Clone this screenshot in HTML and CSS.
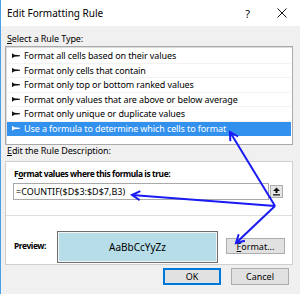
FILE: index.html
```html
<!DOCTYPE html>
<html lang="en">
<head>
    <meta charset="UTF-8" />
    <title>Edit Formatting Rule</title>
    <link rel="stylesheet" href="styles.css">
</head>
<body>
    <div class="dialog">
        <header class="titlebar">
            <span class="title">Edit Formatting Rule</span>
            <span class="help">?</span>
            <svg class="close" width="10" height="10" viewBox="0 0 10 10">
                <path d="M0.5,0.5 L9.5,9.5 M9.5,0.5 L0.5,9.5" stroke="#111" stroke-width="1" fill="none" />
            </svg>
        </header>

        <main class="body">
            <div class="label label-top"><u>S</u>elect a Rule Type:</div>

            <ul class="rule-list">
                <li><span class="bullet"></span>Format all cells based on their values</li>
                <li><span class="bullet"></span>Format only cells that contain</li>
                <li><span class="bullet"></span>Format only top or bottom ranked values</li>
                <li><span class="bullet"></span>Format only values that are above or below average</li>
                <li><span class="bullet"></span>Format only unique or duplicate values</li>
                <li class="selected"><span class="bullet"></span>Use a formula to determine which cells to format</li>
            </ul>

            <div class="label label-desc"><u>E</u>dit the Rule Description:</div>

            <section class="desc-box">
                <div class="formula-section">
                    <div class="bold-label">F<u>o</u>rmat values where this formula is true:</div>
                    <div class="formula-row">
                        <div class="formula-input">=COUNTIF($D$3:$D$7,B3)</div>
                        <button class="collapse">
                            <svg width="9" height="9" viewBox="0 0 9 9">
                                <path d="M4.5,0.5 L8,4 L5.5,4 L5.5,6 L3.5,6 L3.5,4 L1,4 Z" fill="#111" />
                                <rect x="1" y="7.2" width="7" height="1.3" fill="#111" />
                            </svg>
                        </button>
                    </div>
                </div>
                <div class="preview-section">
                    <span class="bold-label preview-label">Preview:</span>
                    <div class="preview">AaBbCcYyZz</div>
                    <button class="btn format-btn"><u>F</u>ormat...</button>
                </div>
            </section>

            <div class="actions">
                <button class="btn ok-btn">OK</button>
                <button class="btn">Cancel</button>
            </div>
        </main>

        <!-- annotation arrows drawn over the dialog -->
        <svg class="arrows" width="300" height="294" viewBox="0 0 300 294">
            <defs>
                <marker id="head" markerUnits="userSpaceOnUse" markerWidth="12" markerHeight="12" refX="9" refY="5" orient="auto">
                    <path d="M1,0.5 L9,5 L1,9.5" fill="none" stroke="#1a1af5" stroke-width="2" />
                </marker>
            </defs>
            <path d="M275,206 L230,132" stroke="#1a1af5" stroke-width="2" fill="none" marker-end="url(#head)" />
            <path d="M275,206 L132,195" stroke="#1a1af5" stroke-width="2" fill="none" marker-end="url(#head)" />
            <path d="M275,206 L236,243" stroke="#1a1af5" stroke-width="2" fill="none" marker-end="url(#head)" />
        </svg>
    </div>
</body>
</html>
```

FILE: styles.css
```css
/* Main Styles */
body {
    margin: 0;
    padding: 0;
    background-color: #f0f0f0;
    font-family: 'Noto Sans', 'Open Sans', sans-serif;
    color: #000;
}

.dialog {
    position: relative;
    width: 299px;
    height: 294px;
    border-left: 1px solid #4a9fe6;
    background-color: #f0f0f0;
    overflow: hidden;
}

/* Title bar */
.titlebar {
    display: flex;
    align-items: center;
    height: 26px;
    background-color: #fff;
    padding-left: 6px;
}

.title {
    font-size: 10px;
    flex: 1;
}

.help {
    font-size: 11px;
    margin-right: 27px;
}

.close {
    margin-right: 13px;
}

/* Body */
.body {
    padding: 0 7px 0 4px;
}

.label {
    font-size: 9px;
    letter-spacing: -0.1px;
    padding-left: 2px;
    line-height: 12px;
}

.label-top {
    margin-top: 7px;
    margin-bottom: 1px;
}

.label-desc {
    line-height: 10px;
    margin-top: 1px;
    margin-bottom: 5px;
}

/* Rule list */
.rule-list {
    list-style: none;
    margin: 0;
    padding: 2px 0 0 0;
    height: 95px;
    background-color: #fff;
    border: 1px solid #a9a9a9;
    box-shadow: inset 1px 1px 0 #dcdcdc;
    overflow: hidden;
}

.rule-list li {
    display: flex;
    align-items: center;
    height: 14.5px;
    margin: 0 1px;
    padding-left: 5px;
    font-size: 9px;
    letter-spacing: -0.1px;
    border-bottom: 1px solid #f2f2f2;
    box-sizing: border-box;
}

.rule-list li.selected {
    background-color: #3391ee;
    color: #fff;
    border-bottom-color: #3391ee;
}

.bullet {
    display: inline-block;
    width: 8px;
    height: 5px;
    margin-right: 4px;
    background: #111;
    clip-path: polygon(0 0, 30% 30%, 100% 40%, 100% 60%, 30% 70%, 0 100%);
}

.selected .bullet {
    background: #fff;
}

/* Description box */
.desc-box {
    background-color: #fff;
    border: 1px solid #cfcfcf;
}

.bold-label {
    font-size: 8.4px;
    letter-spacing: -0.4px;
    font-weight: bold;
    line-height: 12px;
}

.formula-section {
    padding: 6px 9px 15px 7px;
    border-bottom: 1px solid #dedede;
}

.formula-section .bold-label {
    padding-left: 1px;
}

.formula-row {
    display: flex;
    align-items: center;
    margin-top: 3px;
}

.formula-input {
    width: 253px;
    height: 15px;
    line-height: 15px;
    padding-left: 2px;
    border: 1px solid #a9a9a9;
    font-size: 9px;
}

.collapse {
    width: 13px;
    height: 13px;
    margin-left: 1px;
    padding: 0;
    display: flex;
    align-items: center;
    justify-content: center;
    background-color: #e5e5e5;
    border: 1px solid #adadad;
}

.preview-section {
    display: flex;
    align-items: center;
    height: 48px;
    padding: 12px 0 0 8px;
    box-sizing: border-box;
}

.preview-label {
    width: 43px;
}

.preview {
    width: 159px;
    height: 30px;
    display: flex;
    align-items: center;
    justify-content: center;
    background-color: #b7dee8;
    border: 1px solid #6e6e6e;
    box-shadow: inset 0 0 0 1px #f4f4f4;
    font-size: 10px;
    margin-top: 1px;
}

/* Buttons */
.btn {
    font-family: 'Noto Sans', 'Open Sans', sans-serif;
    font-size: 9px;
    height: 17px;
    padding: 0;
    background-color: #e1e1e1;
    border: 1px solid #adadad;
    color: #000;
}

.format-btn {
    width: 59px;
    height: 16px;
    margin-left: 8px;
}

.actions {
    display: flex;
    justify-content: flex-end;
    gap: 10px;
    margin-top: 3px;
    padding-right: 4px;
}

.actions .btn {
    width: 58px;
}

.ok-btn {
    border: 1px solid #0078d7;
    box-shadow: inset 0 0 0 1px #0078d7;
}

/* Arrows overlay */
.arrows {
    position: absolute;
    top: 0;
    left: -1px;
    pointer-events: none;
}
```
